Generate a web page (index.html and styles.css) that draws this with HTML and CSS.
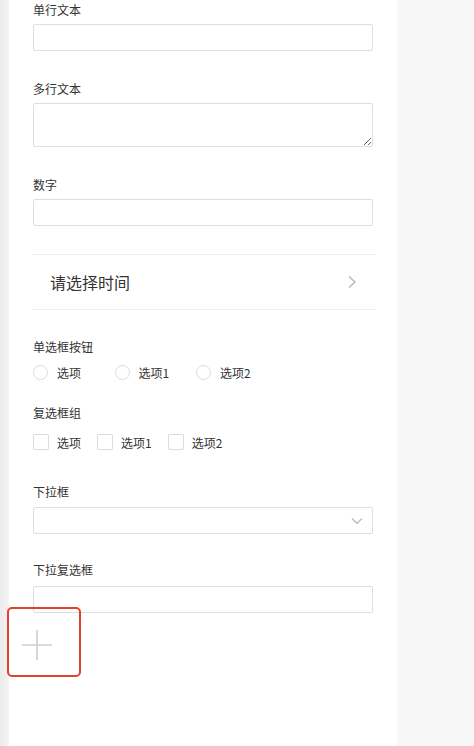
FILE: index.html
```html
<!DOCTYPE html>
<html lang="zh-CN">
<head>
<meta charset="utf-8">
<title>表单</title>
<link rel="stylesheet" href="styles.css">
</head>
<body>
<div class="page">
  <main class="panel">
    <div class="field field-first">
      <div class="label">单行文本</div>
      <input class="input" type="text">
    </div>
    <div class="field">
      <div class="label">多行文本</div>
      <textarea class="textarea"></textarea>
    </div>
    <div class="field field-last">
      <div class="label">数字</div>
      <input class="input" type="text">
    </div>

    <div class="picker">
      <span class="picker-text">请选择时间</span>
      <svg class="picker-arrow" width="10" height="14" viewBox="0 0 10 14"><path d="M2 1.5 L8 7 L2 12.5" fill="none" stroke="#b8b8b8" stroke-width="1.4"/></svg>
    </div>

    <div class="group group-radio">
      <div class="label">单选框按钮</div>
      <div class="options radios">
        <label class="radio"><span class="circle"></span><span class="opt">选项</span></label>
        <label class="radio"><span class="circle"></span><span class="opt">选项1</span></label>
        <label class="radio"><span class="circle"></span><span class="opt">选项2</span></label>
      </div>
    </div>

    <div class="group group-check">
      <div class="label">复选框组</div>
      <div class="options checks">
        <label class="check"><span class="box"></span><span class="opt">选项</span></label>
        <label class="check"><span class="box"></span><span class="opt">选项1</span></label>
        <label class="check"><span class="box"></span><span class="opt">选项2</span></label>
      </div>
    </div>

    <div class="group group-select">
      <div class="label">下拉框</div>
      <div class="select">
        <svg class="select-arrow" width="12" height="8" viewBox="0 0 12 8"><path d="M1 1.5 L6 6.5 L11 1.5" fill="none" stroke="#b8b8b8" stroke-width="1.2"/></svg>
      </div>
    </div>

    <div class="group group-multi">
      <div class="label">下拉复选框</div>
      <div class="select"></div>
    </div>

    <div class="add-row">
      <svg class="plus" width="30" height="30" viewBox="0 0 30 30"><path d="M15 0 V30 M0 15 H30" stroke="#cfcfcf" stroke-width="1.6"/></svg>
      <div class="highlight"></div>
    </div>
  </main>
</div>
</body>
</html>
```

FILE: styles.css
```css
html, body {
  margin: 0;
  padding: 0;
}
body {
  background: #f7f7f7;
  font-family: "Noto Sans CJK SC", "Noto Sans", sans-serif;
  color: #333;
}
.page {
  display: flex;
  min-height: 746px;
  background: linear-gradient(to right, #ececec 0, #f0f0f0 6px, #f7f7f7 9px);
  background-size: 9px 100%;
  background-repeat: no-repeat;
  background-color: #f7f7f7;
}
.panel {
  margin-left: 9px;
  width: 388px;
  min-height: 745px;
  background: #fff;
  box-sizing: border-box;
  padding: 0 24px 0 24px;
}
.label {
  font-size: 12px;
  line-height: 20px;
  height: 20px;
  color: #333;
}
.field {
  margin-bottom: 28px;
}
.field .label {
  margin-bottom: 4px;
}
.field-first {
  margin-top: 0;
}
.input, .textarea, .select {
  display: block;
  width: 340px;
  box-sizing: border-box;
  border: 1px solid #dedede;
  border-radius: 2px;
  background: #fff;
  margin: 0;
  padding: 0 8px;
  outline: none;
  font-family: inherit;
}
.input {
  height: 27px;
}
.textarea {
  height: 44px;
}
.picker {
  display: flex;
  align-items: center;
  justify-content: space-between;
  height: 56px;
  box-sizing: border-box;
  border-top: 1px solid #efefef;
  border-bottom: 1px solid #efefef;
  margin: 0 -3px 0 -1px;
  padding: 0 19px 0 18px;
}
.picker-text {
  font-size: 16px;
  color: #333;
}
.group-radio {
  margin-top: 27px;
}
.group-check {
  margin-top: 21px;
}
.group-select {
  margin-top: 30px;
}
.group-multi {
  margin-top: 26px;
}
.group-select .label {
  margin-bottom: 5px;
}
.group-multi .label {
  margin-bottom: 6px;
}
.options {
  display: flex;
  align-items: center;
  height: 20px;
}
.radios {
  margin-top: 5px;
}
.checks {
  margin-top: 9px;
}
.radio, .check {
  display: flex;
  align-items: center;
  font-size: 12px;
  color: #333;
}
.radio {
  width: 81.5px;
}
.check {
  margin-right: 16px;
}
.circle {
  width: 15px;
  height: 15px;
  box-sizing: border-box;
  border: 1px solid #dcdcdc;
  border-radius: 50%;
  margin-right: 9px;
}
.box {
  width: 16px;
  height: 16px;
  box-sizing: border-box;
  border: 1px solid #dcdcdc;
  border-radius: 1px;
  margin-right: 8px;
}
.select {
  height: 27px;
  display: flex;
  align-items: center;
  justify-content: flex-end;
  padding-right: 9px;
}
.add-row {
  position: relative;
  height: 70px;
  padding-top: 17px;
  box-sizing: border-box;
}
.plus {
  display: block;
  margin: 0 0 0 -11px;
}
.highlight {
  position: absolute;
  left: -26px;
  top: -6px;
  width: 74px;
  height: 70px;
  box-sizing: border-box;
  border: 2px solid #e2412f;
  border-radius: 5px;
}
```
